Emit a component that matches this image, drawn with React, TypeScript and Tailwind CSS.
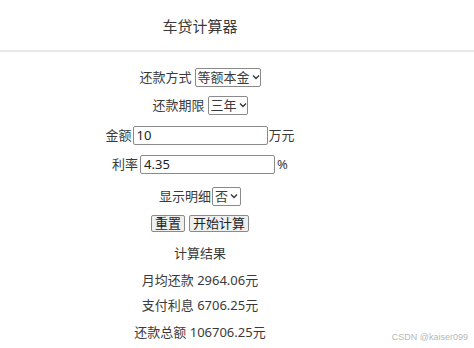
import React from "react";

const Chevron = () => (
  <svg width="8" height="6" viewBox="0 0 8 6" className="shrink-0">
    <path d="M1 1.5 L4 4.5 L7 1.5" fill="none" stroke="#333" strokeWidth="1.3" />
  </svg>
);

const FakeSelect: React.FC<{ value: string; width: string }> = ({ value, width }) => (
  <span
    className={`inline-flex items-center justify-between gap-[2px] h-[19px] ${width} border border-[#8a8a8a] rounded-[2px] bg-white pl-[2px] pr-[2px] text-[13px] leading-none whitespace-nowrap`}
  >
    <span>{value}</span>
    <Chevron />
  </span>
);

const TextInput: React.FC<{ value: string }> = ({ value }) => (
  <input
    readOnly
    value={value}
    className="w-[135px] h-[19px] border border-[#8a8a8a] rounded-[2px] px-[3px] text-[13px] leading-none text-[#222] outline-none"
  />
);

const Btn: React.FC<{ label: string }> = ({ label }) => (
  <button className="h-[17px] px-[3px] border border-[#8a8a8a] rounded-[2px] bg-[#efefef] text-[13px] leading-none text-[#222] whitespace-nowrap">
    {label}
  </button>
);

export default function App() {
  return (
    <div className="relative w-[474px] h-[348px] bg-white text-[#3a3a3a] font-['Noto_Sans','Noto_Sans_CJK_SC',sans-serif] overflow-hidden">
      <div className="w-[400px] h-[50px] flex items-center justify-center text-[15px] pt-[2px]">车贷计算器</div>
      <div className="h-[2px] bg-[#e8e8e8]" />

      <div className="w-[400px] flex flex-col items-center text-[13px] leading-none whitespace-nowrap">
        <div className="h-[20px] mt-[15px] flex items-center gap-[3px]">
          <span>还款方式</span>
          <FakeSelect value="等额本金" width="w-[66px]" />
        </div>
        <div className="h-[20px] mt-[8px] flex items-center gap-[3px]">
          <span>还款期限</span>
          <FakeSelect value="三年" width="w-[40px]" />
        </div>
        <div className="h-[20px] mt-[10px] flex items-center gap-[1px]">
          <span>金额</span>
          <TextInput value="10" />
          <span>万元</span>
        </div>
        <div className="h-[20px] mt-[9px] flex items-center gap-[2px]">
          <span>利率</span>
          <TextInput value="4.35" />
          <span>%</span>
        </div>
        <div className="h-[20px] mt-[12px] flex items-center gap-[1px]">
          <span>显示明细</span>
          <FakeSelect value="否" width="w-[29px]" />
        </div>
        <div className="h-[20px] mt-[7px] flex items-center gap-[4px]">
          <Btn label="重置" />
          <Btn label="开始计算" />
        </div>
        <div className="h-[20px] mt-[10px] flex items-center">计算结果</div>
        <div className="h-[20px] mt-[7px] flex items-center">月均还款 2964.06元</div>
        <div className="h-[20px] mt-[5px] flex items-center">支付利息 6706.25元</div>
        <div className="h-[20px] mt-[7px] flex items-center">还款总额 106706.25元</div>
      </div>

      <div className="absolute right-[6px] bottom-[6px] text-[9px] leading-none text-[#b8b8b8] font-['Liberation_Sans',sans-serif]">
        CSDN @kaiser099
      </div>
    </div>
  );
}
